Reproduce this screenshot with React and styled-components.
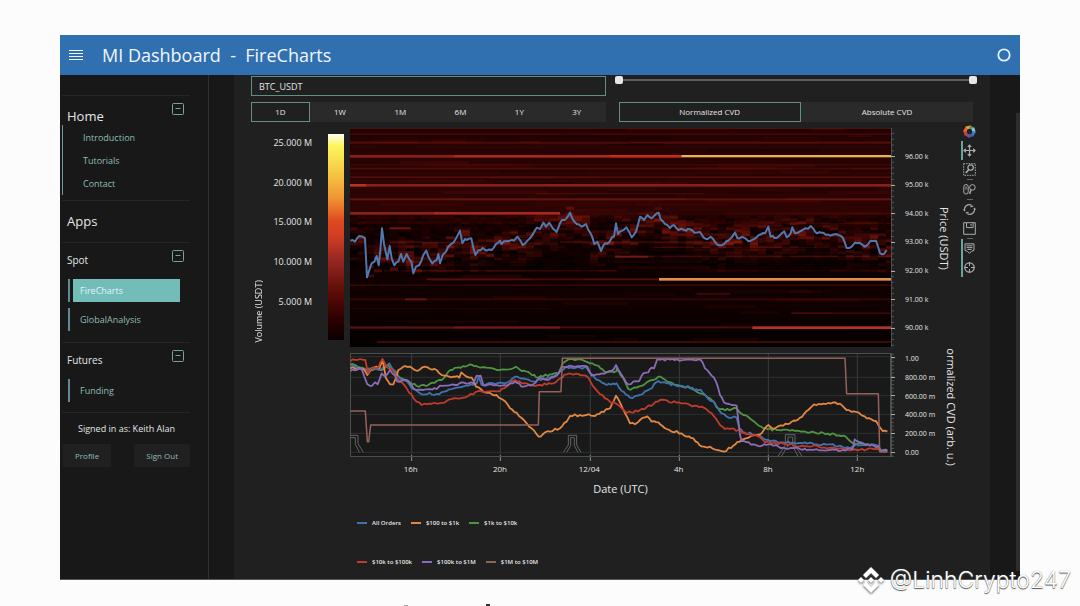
import React, { useState } from "react";
import styled, { createGlobalStyle } from "styled-components";

const GlobalStyle = createGlobalStyle`
  * {
    box-sizing: border-box;
  }

  body {
    margin: 0;
    background: #fcfcfc;
    color: #e4e6e6;
    font-family: "Open Sans", "Noto Sans", sans-serif;
    overflow: hidden;
  }

  button,
  input {
    font-family: inherit;
  }
`;

const Page = styled.div`
  position: relative;
  padding: 35px 60px 0;
  min-height: 100vh;
`;

const TopBar = styled.header`
  display: flex;
  align-items: center;
  height: 40px;
  padding: 0 9px;
  background: #3070b0;
  color: #f0f6fc;

  h1 {
    flex: 1;
    margin: 0 0 0 19px;
    font-size: 18px;
    font-weight: 400;
    line-height: 24px;
    white-space: pre;
  }
`;

const IconButton = styled.button`
  display: flex;
  padding: 0;
  border: 0;
  background: none;
  color: inherit;
`;

const Workspace = styled.div`
  display: flex;
  background: #181818;
  border-bottom: 1px solid #555;
`;

const Sidebar = styled.nav`
  width: 149px;
  padding: 20px 18px 0 2px;
  border-right: 1px solid #303030;
  font-size: 9px;
`;

const Section = styled.section`
  padding-bottom: ${p => p.$bottom}px;
  border-top: 1px solid #262626;
`;

const SectionHead = styled.div`
  display: flex;
  justify-content: space-between;
  align-items: flex-start;
  padding: 7px 6px 0 5px;

  h2,
  h3 {
    margin: 0;
    font-weight: 500;
  }

  h2 {
    padding-top: 4px;
    font-size: 13px;
    line-height: 18px;
  }

  h3 {
    padding-top: 3px;
    font-size: 10px;
    line-height: 14px;
  }
`;

const HomeLinks = styled.div`
  display: flex;
  flex-direction: column;
  border-left: 1px solid #6d9c9a;
  padding: 1px 0 0 20px;

  a {
    color: #8fbdb6;
    line-height: 23px;
    text-decoration: none;
  }
`;

const AppLinks = styled.div`
  display: flex;
  flex-direction: column;
  gap: 6px;
  padding: 12px 10px 0 6px;
`;

const AppLink = styled.a`
  padding-left: 3px;
  border-left: 2px solid #5d8c96;
  color: ${p => (p.$active ? "#e2f3ff" : "#8fbdb6")};
  text-decoration: none;

  span {
    display: block;
    padding-left: 7px;
    line-height: 23px;
    background: ${p => (p.$active ? "#73bdb8" : "none")};
  }
`;

const Account = styled.div`
  padding: 8px 0 0 1px;
  border-top: 1px solid #262626;

  p {
    margin: 0 0 8px;
    line-height: 15px;
    text-align: center;
  }

  div {
    display: flex;
    justify-content: space-between;
  }
`;

const AccountButton = styled.button`
  height: 23px;
  padding: 0 12px;
  border: 0;
  background: #202020;
  color: #8fbdb6;
  font-size: 8px;
`;

const Main = styled.main`
  flex: 1;
  min-width: 0;
  padding: 0 26px 0 25px;
`;

const Panel = styled.div`
  padding: 1px 0 11px;
  background: #202020;
`;

const Controls = styled.div`
  display: grid;
  grid-template-columns: 1fr 1fr;
  gap: 6px 13px;
  padding: 0 17px;
`;

const PairInput = styled.input`
  width: 100%;
  height: 20px;
  padding: 0 7px;
  border: 1px solid #5f8f87;
  background: #202020;
  color: #e4e6e6;
  font-size: 9px;
`;

const DateSlider = styled.div`
  display: grid;
  height: 8px;
  margin: 0 -4px;
  background: linear-gradient(#5c5c5c, #5c5c5c) center / calc(100% - 8px) 2px no-repeat;

  input {
    grid-area: 1 / 1;
    width: 100%;
    height: 8px;
    margin: 0;
    appearance: none;
    background: none;
    pointer-events: none;
  }

  input::-webkit-slider-thumb {
    appearance: none;
    width: 8px;
    height: 8px;
    border-radius: 2px;
    background: #e6e6e6;
    pointer-events: auto;
  }
`;

const ButtonGroup = styled.div`
  display: flex;
  height: 20px;
  background: #2a2a2a;
`;

const GroupButton = styled.button`
  flex: 1 1 auto;
  padding: 0 0 2px;
  border: 1px solid ${p => (p.$active ? "#5f8f87" : "transparent")};
  background: ${p => (p.$active ? "#202020" : "none")};
  color: #e4e6e6;
  font-size: 8px;
  font-weight: ${p => (p.$active ? 400 : 500)};
`;

const ChartArea = styled.div`
  display: flex;
  padding: 0 12px 0 17px;
`;

const VolumeScale = styled.div`
  display: grid;
  grid-template-columns: 14px 47px 16px;
  align-items: start;
  width: 99px;
`;

const AxisTitle = styled.div`
  writing-mode: vertical-rl;
  font-size: ${p => p.$size}px;
  line-height: 12px;
  white-space: nowrap;
`;

const VolumeTitle = styled(AxisTitle)`
  justify-self: end;
  margin-top: 158px;
  transform: rotate(180deg);
`;

const VolumeTicks = styled.div`
  display: grid;
  grid-auto-rows: 1fr;
  align-items: center;
  height: 198px;
  margin-top: 1px;
  font-size: 9px;
  text-align: right;
  white-space: nowrap;
`;

const ColorBar = styled.div`
  width: 16px;
  height: 206px;
  margin: 12px 0 0 16px;
  background: linear-gradient(
    #fdfdf2 0%,
    #fdf55a 6%,
    #f7cb45 18%,
    #ee9030 32%,
    #e04a22 42%,
    #cf3d22 50%,
    #9c2a22 60%,
    #5e0d08 76%,
    #2c0000 90%,
    #0a0000 100%
  );
`;

const Plots = styled.div`
  flex: 1;
  min-width: 0;
  padding-top: 6px;

  svg {
    display: block;
    width: 100%;
  }
`;

const CvdPlot = styled.svg`
  height: 108px;
  margin-top: 6px;
`;

const TimeTicks = styled.div`
  display: grid;
  grid-template-columns: repeat(6, 1fr);
  margin: 1px -11px 0 16px;
  font-size: 8px;
  line-height: 14px;
  text-align: center;
`;

const TimeTitle = styled.div`
  margin-top: 5px;
  font-size: 11px;
  line-height: 16px;
  text-align: center;
`;

const RightAxes = styled.div`
  width: 70px;
  padding-top: 6px;
`;

const Axis = styled.div`
  display: grid;
  grid-template-columns: 6px ${p => p.$labels}px 12px;
  grid-template-rows: ${p => p.$height}px;
  column-gap: 4px;
  align-items: start;
  overflow: hidden;

  ${AxisTitle} {
    align-self: ${p => p.$titleAlign};
  }
`;

const AxisLabels = styled.div`
  display: grid;
  grid-auto-rows: 1fr;
  align-items: center;
  height: ${p => p.$height}px;
  margin-top: ${p => p.$top}px;
  padding-left: 4px;
  font-size: 7px;
  font-weight: 500;
  white-space: nowrap;
`;

const Toolbar = styled.div`
  display: flex;
  flex-direction: column;
  width: 17px;

  hr {
    width: 6px;
    height: 1px;
    margin: 0 auto 0 6px;
    border: 0;
    background: #666;
  }
`;

const Tool = styled.button`
  display: flex;
  align-items: center;
  height: 19px;
  padding: 0;
  border: 0;
  border-left: 2px solid ${p => (p.$active ? "#6da39e" : "transparent")};
  background: none;
  color: #a9adad;
`;

const Legend = styled.div`
  display: grid;
  gap: 27px;
  margin-top: 20px;
  padding-left: 123px;
`;

const LegendRow = styled.ul`
  display: flex;
  gap: 10px;
  margin: 0;
  padding: 0;
  list-style: none;
  font-size: 6px;
  font-weight: 600;
  line-height: 12px;

  li {
    display: flex;
    align-items: center;
    gap: 5px;
  }
`;

const Swatch = styled.span`
  width: 10px;
  height: 2px;
  background: ${p => p.color};
`;

const ScrollTrack = styled.div`
  width: 4px;
  padding: 38px 0 8px;

  div {
    height: 100%;
    background: #2d2d2d;
  }
`;

const Watermark = styled.div`
  position: absolute;
  right: 9px;
  top: 566px;
  display: flex;
  align-items: center;
  gap: 5px;
  color: #fff;
  font-family: Inter, "Liberation Sans", sans-serif;
  font-size: 23px;
  font-weight: 300;
  line-height: 28px;
  text-shadow: 0 1px 1px #555, 0 0 1px #777;
  white-space: nowrap;

  svg {
    filter: drop-shadow(0 1px 1px #555);
  }
`;

const NextLine = styled.svg`
  position: absolute;
  left: 400px;
  top: 603px;
`;

// each run is [x offset, "x,y x,y ..."], three chart units to a pixel
const toPoints = runs =>
  runs.flatMap(([dx, text]) =>
    text.split(" ").map(pair => {
      const [x, y] = pair.split(",").map(Number);
      return [x + dx, y - 24];
    })
  );

const price = toPoints([
  [-330, "331,362 345,365 358,348 375,355 381,472 395,430 403,425 410,408 416,436 421,390 426,325 432,372 442,418 449,378 455,415 463,436 475,425 483,402 490,425 500,402 508,418 514,425 520,460 528,440 538,435 550,405 559,392 566,412 577,430 590,420 595,402 600,430 608,405 618,395 625,380 640,368 650,352 660,332 667,370 675,357 694,355 706,405 716,390 728,384 740,392 755,390 768,372 780,362 784,372 792,364 810,362 822,362 832,350 848,375 862,362 870,355 880,340 890,323 900,327"],
  [570, "10,308 18,320 28,308 38,325 50,336 60,310 66,300 75,300 83,290 90,278 98,298 110,312 125,320 138,312 145,330 152,340 163,372 172,365 183,393 195,370 208,366 217,350 222,350 228,310 234,342 247,332 259,322 275,352 288,335 300,290 312,300 322,285 335,295 345,285 356,278 362,298 375,312 390,324 403,316 415,330 425,326 438,332 450,328 463,338 480,336 490,352 502,358 512,350 525,366 540,376 553,372 565,362 575,352 585,338 592,354 610,352 625,364 640,358 655,346 675,340 685,320 692,350 710,354 725,340 733,334 740,352 752,340 757,322 765,340 780,334 795,325 805,326 812,318 820,326 832,340 850,338 865,344 890,342 908,352 920,384 935,380 945,368 958,368 975,380 992,362 1008,362 1020,400 1032,402 1040,390"]
]);

const series = [
  {
    name: "$1k to $10k",
    color: "#4f9440",
    points: toPoints([
      [-30, "31,58 60,68 90,76 120,75 145,62 160,75 180,98 210,112 230,123 265,120 290,108 305,105 325,80 350,68 375,65 390,58 415,66 440,68 470,75 505,73 527,65 545,78 570,85 595,98 630,88 655,85 668,55 690,42 720,43 750,55 775,62 800,82 830,78"],
      [780, "20,70 40,100 55,132 80,128 110,112 130,105 145,95 165,104 200,120 240,128 270,145 300,160 325,190 345,196 380,190 400,210 430,228 460,250 500,255 560,257 600,262 640,264 700,272 720,288 740,296 770,298 805,305 812,318 832,318"]
    ])
  },
  {
    name: "All Orders",
    color: "#3f72ae",
    points: toPoints([
      [-30, "31,62 60,72 80,75 100,70 125,72 148,55 160,75 180,100 200,108 215,130 240,145 290,147 320,138 350,128 385,122 410,115 416,95 425,120 460,115 495,115 525,95 550,100 580,110 610,100 640,98 660,80 680,65 700,70 740,68 765,100 800,120 825,118"],
      [780, "20,115 35,138 60,158 90,150 120,132 145,108 170,115 210,122 240,130 272,134 290,155 315,175 335,205 350,215 380,218 388,250 400,262 440,270 475,285 520,292 570,294 620,298 690,302 720,310 740,298 780,300 805,302 812,315 832,316"]
    ])
  },
  {
    name: "$100 to $1k",
    color: "#e28742",
    points: toPoints([
      [-30, "31,70 70,72 82,90 95,70 110,65 118,70 128,45 138,100 150,118 160,118 175,75 190,65 215,68 232,78 255,65 270,72 290,75 305,90 340,95 358,98 364,82 380,95 395,98 408,125 430,140 470,150 490,165 510,190 530,203 560,235 575,250 590,268 602,275 615,262 660,250 680,230 690,213 720,210 740,210 765,213 785,200 810,190"],
      [780, "18,152 38,190 60,235 75,238 90,225 112,214 125,230 145,232 170,252 185,260 200,258 230,275 250,280 275,304 300,305 320,315 342,320 370,302 395,285 420,275 455,265 475,240 490,252 520,242 545,230 570,218 595,195 612,178 640,176 670,172 690,176 710,195 745,202 770,220 798,228 808,245 818,258 832,260"]
    ])
  },
  {
    name: "$10k to $100k",
    color: "#c03b2b",
    points: toPoints([
      [-30, "31,48 60,42 76,45 84,85 95,70 115,68 127,42 138,65 155,72 170,98 200,130 222,162 245,180 290,176 320,168 350,160 400,148 415,138 440,140 480,138 500,125 525,105 545,115 580,122 640,115 660,100 680,88 720,90 745,98 765,130 795,160 815,175"],
      [780, "10,170 25,180 50,204 90,195 130,178 150,165 200,173 240,180 275,185 305,205 330,240 345,252 385,255 410,268 440,272 465,292 520,296 570,304 620,302 650,310 700,312 750,314 805,312 812,320 832,320"]
    ])
  },
  {
    name: "$100k to $1M",
    color: "#8a6bb5",
    points: toPoints([
      [-30, "31,78 65,72 82,118 95,123 105,112 113,118 125,85 135,95 150,75 165,92 172,110 200,105 222,132 250,135 290,132 300,122 345,120 365,112 400,115 410,92 422,92 430,120 470,120 500,122 525,110 550,125 580,118 600,98 620,105 650,92 668,65 700,65 742,65 755,92 785,85 815,78"],
      [780, "18,60 35,90 55,118 70,110 88,108 100,85 115,82 120,72 132,70 142,42 180,44 272,44 285,70 305,92 318,110 330,150 342,172 365,180 380,182 390,270 395,288 430,298 450,304 475,298 520,308 570,312 640,316 700,315 728,312 734,283 745,290 760,295 780,302 805,304 812,318 832,316"]
    ])
  },
  {
    name: "$1M to $10M",
    color: "#94625a",
    steady: true,
    points: toPoints([
      [-30, "31,198 76,198 82,290 86,290 92,240 595,240 598,140 663,140 667,40"],
      [780, "705,40 710,146 805,146 809,320 832,320"]
    ])
  }
];

const legendRows = [
  ["All Orders", "$100 to $1k", "$1k to $10k"],
  ["$10k to $100k", "$100k to $1M", "$1M to $10M"]
];

const makeRandom = start => {
  let seed = start;
  return () => {
    seed = (seed * 16807) % 2147483647;
    return seed / 2147483647;
  };
};

// adds small tick to tick movement between the known points
const roughen = (points, size, start) => {
  const rand = makeRandom(start);
  const out = [points[0]];
  for (let i = 1; i < points.length; i++) {
    const [x0, y0] = points[i - 1];
    const [x1, y1] = points[i];
    const steps = Math.max(1, Math.round((x1 - x0) / 7));
    for (let s = 1; s <= steps; s++) {
      const t = s / steps;
      const jitter = s === steps ? 0 : (rand() - 0.5) * size;
      out.push([x0 + (x1 - x0) * t, y0 + (y1 - y0) * t + jitter]);
    }
  }
  return out.map(([x, y]) => `${x.toFixed(1)},${y.toFixed(1)}`).join(" ");
};

const priceAt = x => {
  const i = price.findIndex(p => p[0] >= x);
  if (i < 1) return i === 0 ? price[0][1] : price[price.length - 1][1];
  const [x0, y0] = price[i - 1];
  const [x1, y1] = price[i];
  return y0 + ((y1 - y0) * (x - x0)) / (x1 - x0);
};

// resting order levels: [y, height, from, to, colour]
const levels = [
  [0, 3, 0, 1623, "#451410"],
  [16, 5, 0, 1623, "#3c0806"],
  [41, 6, 0, 1623, "#540e0a"],
  [56, 3, 0, 1623, "#300604"],
  [108, 5, 0, 1623, "#3a0806"],
  [119, 5, 0, 1623, "#4c0c08"],
  [133, 4, 0, 1623, "#360604"],
  [145, 5, 0, 1623, "#520e0a"],
  [158, 3, 0, 1623, "#380604"],
  [195, 4, 560, 1060, "#480c08"],
  [211, 6, 0, 1623, "#641410"],
  [254, 6, 630, 1623, "#380806"],
  [268, 4, 0, 440, "#340604"],
  [284, 5, 1300, 1623, "#3a0a06"],
  [340, 6, 120, 330, "#4c0e0a"],
  [340, 6, 630, 1180, "#500e0a"],
  [356, 4, 900, 1400, "#3a0806"],
  [383, 5, 895, 1623, "#440c08"],
  [426, 5, 100, 800, "#3a0806"],
  [426, 5, 1100, 1623, "#280404"],
  [451, 6, 230, 925, "#500e0a"],
  [469, 5, 0, 1623, "#380604"],
  [495, 5, 1040, 1140, "#420806"],
  [511, 6, 0, 1623, "#300604"],
  [511, 6, 165, 230, "#601410"],
  [540, 4, 0, 600, "#200202"],
  [553, 5, 1324, 1623, "#440a08"],
  [639, 6, 80, 1623, "#3e0a06"]
];

// the largest levels stay above the background depth
const strongLevels = [
  [81, 8, 0, 310, "#8c2018"],
  [81, 8, 310, 780, "#a52a1e"],
  [81, 8, 780, 994, "#c42c1c"],
  [81, 7, 994, 1623, "#e8b24c"],
  [168, 8, 0, 50, "#b83222"],
  [168, 8, 50, 1623, "#86201a"],
  [252, 8, 0, 250, "#86221a"],
  [252, 8, 250, 630, "#a02a20"],
  [298, 6, 118, 182, "#701410"],
  [383, 6, 795, 895, "#701a14"],
  [450, 8, 927, 1623, "#e2904e"],
  [595, 7, 0, 310, "#561210"],
  [595, 7, 310, 630, "#741814"],
  [595, 6, 630, 1207, "#480c0a"],
  [595, 8, 1207, 1623, "#b8302a"]
];

const heatCells = (() => {
  const rand = makeRandom(4211);
  const cells = [];
  for (let x = 0; x < 1623; x += 24) {
    const mid = priceAt(x + 12);
    for (let y = 262; y < 430; y += 9) {
      const distance = Math.abs(y - mid);
      const strength = Math.max(0, 1 - distance / 75);
      const roll = rand();
      const width = roll > 0.8 ? 48 : 24;
      if (roll < 0.4) cells.push([x, y, width, "#000", 0.15 + rand() * 0.35]);
      else cells.push([x, y, width, "#a8200f", strength * rand() * 0.5 + 0.01]);
    }
    for (let y = mid - 27; y < mid + 27; y += 9) {
      if (rand() > 0.5) cells.push([x, y, 24, "#a8200f", rand() * 0.4]);
    }
  }
  for (let i = 0; i < 150; i++) {
    const y = Math.floor(rand() * 72) * 9;
    cells.push([rand() * 1500, y, 60 + rand() * 300, rand() > 0.5 ? "#000" : "#80100a", 0.05 + rand() * 0.12]);
  }
  return cells;
})();

const minorTicks = (from, to, step) => {
  const ticks = [];
  for (let y = from; y <= to; y += step) ticks.push(y);
  return ticks;
};

const Levels = ({ items }) =>
  items.map(([y, h, from, to, fill], i) => (
    <rect key={i} x={from} y={y} width={to - from} height={h} fill={fill} />
  ));

const HeatMap = () => (
  <svg height="219" viewBox="0 0 1623 657" preserveAspectRatio="none" role="img" aria-label="Order book heat map">
    <defs>
      <linearGradient id="depth" x1="0" y1="0" x2="0" y2="1">
        <stop offset="0" stopColor="#240202" />
        <stop offset="0.38" stopColor="#2e0403" />
        <stop offset="0.44" stopColor="#1a0101" />
        <stop offset="0.62" stopColor="#0e0000" />
        <stop offset="0.8" stopColor="#110000" />
        <stop offset="1" stopColor="#040000" />
      </linearGradient>
    </defs>
    <rect width="1623" height="657" fill="url(#depth)" />
    <Levels items={levels} />
    {heatCells.map(([x, y, w, fill, opacity], i) => (
      <rect key={i} x={x} y={y} width={w} height="9" fill={fill} opacity={opacity} />
    ))}
    <Levels items={strongLevels} />
    <polyline
      points={roughen(price, 7, 77)}
      fill="none"
      stroke="#5078ae"
      strokeWidth="2"
      strokeLinejoin="round"
      vectorEffect="non-scaling-stroke"
    />
  </svg>
);

const CvdChart = () => (
  <CvdPlot viewBox="0 0 1623 324" preserveAspectRatio="none" role="img" aria-label="Normalized CVD by order size">
    <rect width="1623" height="312" fill="#191919" />
    <g stroke="#373c3a">
      {[11, 73, 128, 184, 241, 298].map(y => (
        <path key={y} d={`M0 ${y}H1623`} strokeWidth="2" />
      ))}
      {[185, 451, 721, 988, 1255, 1522].map(x => (
        <path key={x} d={`M${x} 0V312`} strokeWidth="3" />
      ))}
    </g>
    <g stroke="#8a8f8d" strokeWidth="3">
      {[185, 451, 721, 988, 1255, 1522].map(x => (
        <path key={x} d={`M${x} 306V324`} />
      ))}
    </g>
    <rect x="1.5" y="1.5" width="1620" height="309" fill="none" stroke="#48504d" strokeWidth="3" />
    <g fill="none" stroke="#5f6462" strokeWidth="3">
      <path d="M2 247H24V272L40 298M2 254H16V274L28 298" />
      <path d="M640 298L655 276V247H680V276L693 298M650 298L662 278V254H673V278L684 298" />
      <path d="M1284 310L1306 276V245H1335V276L1356 310M1294 310L1314 278V252H1328V278L1344 310M1306 268H1335" />
    </g>
    {series.map((line, i) => (
      <polyline
        key={line.name}
        points={roughen(line.points, line.steady ? 0 : 7, 31 + i)}
        fill="none"
        stroke={line.color}
        strokeWidth={line.steady ? 1.5 : 1.8}
        strokeLinejoin="round"
        vectorEffect="non-scaling-stroke"
      />
    ))}
  </CvdPlot>
);

const AxisTicks = ({ height, top, bottom, major, minor }) => (
  <svg width="6" height={height}>
    <path d={`M0.5 ${top}V${bottom}`} stroke="#4a4f4d" />
    {minor.map(y => (
      <path key={y} d={`M0 ${y}H3`} stroke="#5c6260" strokeWidth="0.8" />
    ))}
    {major.map(y => (
      <path key={y} d={`M0 ${y}H4`} stroke="#a8adab" />
    ))}
  </svg>
);

const CollapseButton = ({ label }) => (
  <IconButton type="button" aria-label={`Collapse ${label}`}>
    <svg width="12" height="12" viewBox="0 0 12 12" fill="none" stroke="#77a39c">
      <rect x="0.5" y="0.5" width="11" height="11" rx="1" />
      <path d="M3.5 5.5h5" />
    </svg>
  </IconButton>
);

const wheelColors = ["#e9a33b", "#5e9b4c", "#8fc4d8", "#3f7fc0", "#3a5fa8", "#7a4f9a", "#c8402f", "#e2663a"];

const BokehLogo = () => (
  <svg width="13" height="13" viewBox="-7 -7 14 14">
    {wheelColors.map((fill, i) => (
      <path key={fill} d="M-2.4 -6.6L3 -5.8L1.8 -2.9L-1.8 -3Z" fill={fill} transform={`rotate(${i * 45 - 22})`} />
    ))}
  </svg>
);

const toolIcons = {
  pan: (
    <path
      strokeWidth="1.2"
      d="M6.5 1v11M1 6.5h11M4.8 2.8l1.7-1.8 1.7 1.8M4.8 10.2l1.7 1.8 1.7-1.8M2.8 4.8L1 6.5l1.8 1.7M10.2 4.8L12 6.5l-1.8 1.7"
    />
  ),
  box: (
    <g>
      <path d="M.7.7v11.6h11.6V.7z" strokeDasharray="1.5 1" />
      <circle cx="7.6" cy="4.6" r="2.7" strokeWidth="1.2" />
      <path d="M5.6 6.8L2.8 10" strokeWidth="1.7" />
    </g>
  ),
  wheel: (
    <g>
      <rect x="0.8" y="1.5" width="4.4" height="9.6" rx="2.2" />
      <path d="M3 3.4v3.2" />
      <circle cx="9.4" cy="4.4" r="2.8" />
      <path d="M8 6.8L6.6 11" strokeWidth="1.4" />
    </g>
  ),
  reset: (
    <g strokeWidth="1.2">
      <path d="M1.8 8A4.8 4.8 0 0 1 8.6 2.2M11.2 5A4.8 4.8 0 0 1 4.4 10.8" />
      <path d="M10.2 3.2L7.4 3.6M2.8 9.8l2.8-.4M1.8 8L.6 6.4M11.2 5l1.2 1.6" />
    </g>
  ),
  save: (
    <g>
      <path d="M.7.7h11.6v11.6H.7z" />
      <path d="M3.5 1v4.6h6.6V1M8 2v2.2" />
    </g>
  ),
  hover: (
    <g>
      <path d="M2 1.8h9v6.6L8.6 9.4 6.5 11.2 4.4 9.4 2 8.4z" />
      <path d="M3.5 3.8h6M3.5 5.6h6M4.4 7.4h4.2" />
    </g>
  ),
  crosshair: (
    <g>
      <circle cx="6.5" cy="6.5" r="4.7" strokeWidth="1.2" />
      <path d="M6.5 1v4M6.5 8v4M1 6.5h4M8 6.5h4" />
    </g>
  )
};

const ToolButton = ({ icon, label, active }) => (
  <Tool type="button" $active={active} aria-label={label}>
    {icon === "logo" ? (
      <BokehLogo />
    ) : (
      <svg width="13" height="13" viewBox="0 0 13 13" fill="none" stroke="currentColor" strokeWidth="1">
        {toolIcons[icon]}
      </svg>
    )}
  </Tool>
);

const SideMenu = () => (
  <Sidebar>
    <Section $bottom={5}>
      <SectionHead>
        <h2>Home</h2>
        <CollapseButton label="Home" />
      </SectionHead>
      <HomeLinks>
        <a href="#introduction">Introduction</a>
        <a href="#tutorials">Tutorials</a>
        <a href="#contact">Contact</a>
      </HomeLinks>
    </Section>
    <Section $bottom={12}>
      <SectionHead>
        <h2>Apps</h2>
      </SectionHead>
    </Section>
    <Section $bottom={11}>
      <SectionHead>
        <h3>Spot</h3>
        <CollapseButton label="Spot" />
      </SectionHead>
      <AppLinks>
        <AppLink href="#firecharts" $active>
          <span>FireCharts</span>
        </AppLink>
        <AppLink href="#globalanalysis">
          <span>GlobalAnalysis</span>
        </AppLink>
      </AppLinks>
    </Section>
    <Section $bottom={10}>
      <SectionHead>
        <h3>Futures</h3>
        <CollapseButton label="Futures" />
      </SectionHead>
      <AppLinks>
        <AppLink href="#funding">
          <span>Funding</span>
        </AppLink>
      </AppLinks>
    </Section>
    <Account>
      <p>Signed in as: Keith Alan</p>
      <div>
        <AccountButton type="button">Profile</AccountButton>
        <AccountButton type="button">Sign Out</AccountButton>
      </div>
    </Account>
  </Sidebar>
);

const App = () => {
  const [range, setRange] = useState("1D");
  const [mode, setMode] = useState("Normalized CVD");

  return (
    <Page>
      <GlobalStyle />
      <TopBar>
        <IconButton type="button" aria-label="Menu">
          <svg width="14" height="12" viewBox="0 0 14 12" stroke="currentColor" strokeWidth="1.2">
            <path d="M0 1.5h14M0 4.5h14M0 7.5h14M0 10.5h14" />
          </svg>
        </IconButton>
        <h1>{"MI Dashboard  -  FireCharts"}</h1>
        <svg width="14" height="14" viewBox="0 0 14 14" fill="none" stroke="#e2f2ff" strokeWidth="1.8">
          <circle cx="7" cy="7" r="5.7" />
        </svg>
      </TopBar>
      <Workspace>
        <SideMenu />
        <Main>
          <Panel>
            <Controls>
              <PairInput type="text" aria-label="Trading pair" defaultValue="BTC_USDT" />
              <DateSlider>
                <input type="range" aria-label="Range start" defaultValue="0" />
                <input type="range" aria-label="Range end" defaultValue="100" />
              </DateSlider>
              <ButtonGroup>
                {["1D", "1W", "1M", "6M", "1Y", "3Y"].map(item => (
                  <GroupButton type="button" key={item} $active={item === range} onClick={() => setRange(item)}>
                    {item}
                  </GroupButton>
                ))}
              </ButtonGroup>
              <ButtonGroup>
                {["Normalized CVD", "Absolute CVD"].map(item => (
                  <GroupButton type="button" key={item} $active={item === mode} onClick={() => setMode(item)}>
                    {item}
                  </GroupButton>
                ))}
              </ButtonGroup>
            </Controls>
            <ChartArea>
              <VolumeScale>
                <VolumeTitle $size={9}>Volume (USDT)</VolumeTitle>
                <VolumeTicks>
                  {["25.000 M", "20.000 M", "15.000 M", "10.000 M", "5.000 M"].map(tick => (
                    <span key={tick}>{tick}</span>
                  ))}
                </VolumeTicks>
                <ColorBar />
              </VolumeScale>
              <Plots>
                <HeatMap />
                <CvdChart />
                <TimeTicks>
                  {["16h", "20h", "12/04", "4h", "8h", "12h"].map(tick => (
                    <span key={tick}>{tick}</span>
                  ))}
                </TimeTicks>
                <TimeTitle>Date (UTC)</TimeTitle>
              </Plots>
              <RightAxes>
                <Axis $labels={33} $height={221} $titleAlign="center">
                  <AxisTicks
                    height={221}
                    top={0}
                    bottom={219}
                    major={[28.5, 57.5, 85.5, 114.5, 143.5, 171.5, 200.5]}
                    minor={minorTicks(5.6, 219, 5.72)}
                  />
                  <AxisLabels $height={200} $top={14}>
                    {["96.00 k", "95.00 k", "94.00 k", "93.00 k", "92.00 k", "91.00 k", "90.00 k"].map(tick => (
                      <span key={tick}>{tick}</span>
                    ))}
                  </AxisLabels>
                  <AxisTitle $size={11}>Price (USDT)</AxisTitle>
                </Axis>
                <Axis $labels={40} $height={117} $titleAlign="end">
                  <AxisTicks
                    height={117}
                    top={4}
                    bottom={108}
                    major={[8.5, 28.5, 46.5, 65.5, 84.5, 103.5]}
                    minor={minorTicks(5.2, 108, 3.78)}
                  />
                  <AxisLabels $height={113} $top={0}>
                    {["1.00", "800.00 m", "600.00 m", "400.00 m", "200.00 m", "0.00"].map(tick => (
                      <span key={tick}>{tick}</span>
                    ))}
                  </AxisLabels>
                  <AxisTitle $size={11}>Normalized CVD (arb. u.)</AxisTitle>
                </Axis>
              </RightAxes>
              <Toolbar>
                <ToolButton icon="logo" label="Bokeh" />
                <ToolButton icon="pan" label="Pan" active />
                <ToolButton icon="box" label="Box zoom" />
                <hr />
                <ToolButton icon="wheel" label="Wheel zoom" />
                <hr />
                <ToolButton icon="reset" label="Reset" />
                <ToolButton icon="save" label="Save" />
                <hr />
                <ToolButton icon="hover" label="Hover" active />
                <ToolButton icon="crosshair" label="Crosshair" active />
              </Toolbar>
            </ChartArea>
            <Legend>
              {legendRows.map(row => (
                <LegendRow key={row[0]}>
                  {row.map(name => (
                    <li key={name}>
                      <Swatch color={series.find(line => line.name === name).color} />
                      {name}
                    </li>
                  ))}
                </LegendRow>
              ))}
            </Legend>
          </Panel>
        </Main>
        <ScrollTrack>
          <div />
        </ScrollTrack>
      </Workspace>
      <Watermark>
        <svg width="28" height="28" viewBox="0 0 28 28" fill="#fff">
          <path d="M14 1l8 8-3 3-5-5-5 5-3-3zM14 27l-8-8 3-3 5 5 5-5 3 3zM14 11l3 3-3 3-3-3zM4 11l3 3-3 3-3-3zM24 11l3 3-3 3-3-3z" />
        </svg>
        @LinhCrypto247
      </Watermark>
      <NextLine width="100" height="3" viewBox="0 0 100 3">
        <path d="M4 2.5h4" stroke="#aaa" />
        <path d="M86 2h4" stroke="#333" strokeWidth="2" />
      </NextLine>
    </Page>
  );
};

export default App;
